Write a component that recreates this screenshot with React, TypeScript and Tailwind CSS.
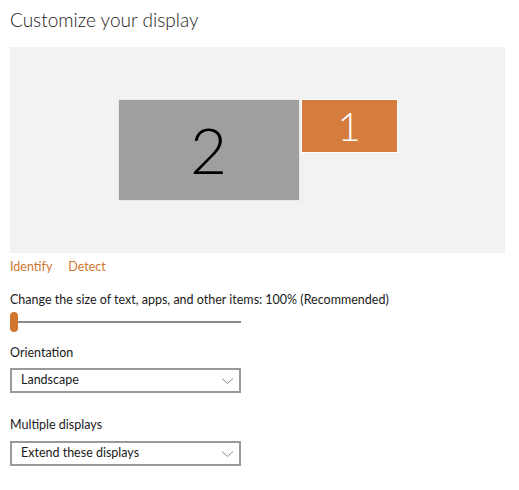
import React from "react";

function Chevron() {
  return (
    <svg width="13" height="8" viewBox="0 0 13 8" className="text-[#888]">
      <path d="M1 1.5 L6.5 6.5 L12 1.5" fill="none" stroke="currentColor" strokeWidth="1" />
    </svg>
  );
}

function Dropdown({ value }: { value: string }) {
  return (
    <div className="flex h-[25px] w-[231px] items-center justify-between border-2 border-[#999] bg-white pl-[9px] pr-[5px] text-[12.5px] text-[#1a1a1a]">
      <span>{value}</span>
      <Chevron />
    </div>
  );
}

export default function App() {
  return (
    <div
      className="h-[490px] w-[519px] bg-white pl-[10px] text-[#1a1a1a]"
      style={{ fontFamily: 'Lato, "Open Sans", sans-serif' }}
    >
      <h1 className="pt-[6px] text-[19px] font-light leading-[28px] text-[#222]">Customize your display</h1>
      <div className="mt-[13px] flex h-[206px] w-[495px] items-center justify-center bg-[#f2f2f2]">
        <div className="flex items-start gap-[1px]">
          <div className="flex h-[102px] w-[182px] items-center justify-center border border-[#e8e8e8] bg-[#9f9f9f]">
            <span className="text-[64px] font-light leading-none text-black">2</span>
          </div>
          <div className="flex h-[54px] w-[97px] items-center justify-center border border-white bg-[#d67d3d]">
            <span className="text-[40px] font-light leading-none text-white">1</span>
          </div>
        </div>
      </div>
      <div className="mt-[5px] flex gap-[16px] text-[12.5px] leading-[18px] text-[#d0772f]">
        <span>Identify</span>
        <span>Detect</span>
      </div>
      <div className="mt-[15px] text-[12.5px] leading-[18px]">
        Change the size of text, apps, and other items: 100% (Recommended)
      </div>
      <div className="mt-[3px] flex h-[20px] w-[231px] items-center">
        <div className="h-[20px] w-[8px] rounded-[4px] bg-[#d0772f]" />
        <div className="h-[2px] flex-1 bg-[#8a8a8a]" />
      </div>
      <div className="mt-[12px] text-[12.5px] leading-[18px]">Orientation</div>
      <div className="mt-[6px]">
        <Dropdown value="Landscape" />
      </div>
      <div className="mt-[23px] text-[12.5px] leading-[18px]">Multiple displays</div>
      <div className="mt-[7px]">
        <Dropdown value="Extend these displays" />
      </div>
    </div>
  );
}
